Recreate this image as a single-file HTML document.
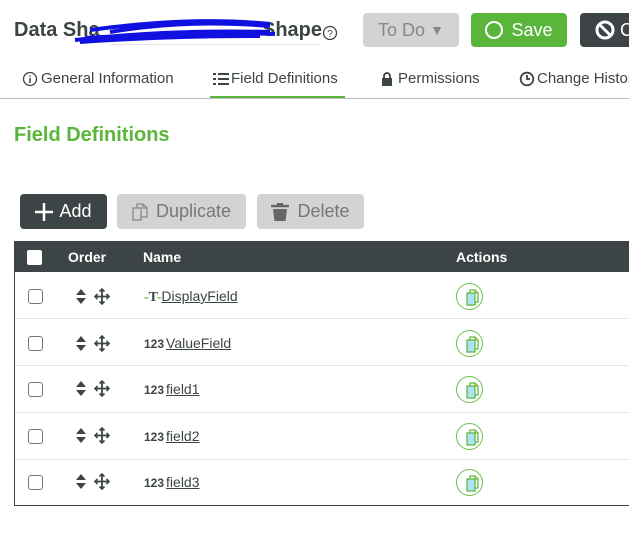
<!DOCTYPE html>
<html><head><style>
*{margin:0;padding:0;box-sizing:border-box}
body{width:629px;height:548px;overflow:hidden;background:#fff;font-family:"Liberation Sans",sans-serif;color:#3d4446;position:relative}
.a{position:absolute}
.btn{position:absolute;border-radius:4px;font-size:18px;display:flex;align-items:center;justify-content:center}
.tab{position:absolute;top:70px;font-size:15px;color:#3d4446;white-space:nowrap;display:flex;align-items:center}
.row{position:absolute;left:15px;width:620px;height:47px;border-bottom:1px solid #e5e5e5}
.cb{position:absolute;left:13px;width:15px;height:15px;border:1.5px solid #777;border-radius:3px;background:#fff}
.nm{position:absolute;left:129px;font-size:14px;white-space:nowrap}
.nm u{color:#3d4446}
.nm b{font-size:12px;margin-right:2px}
.ord{position:absolute;left:60px}
.act{position:absolute;left:441px;width:27px;height:27px;border:1px solid #6cc04a;border-radius:50%}
.act svg{position:absolute;left:6px;top:5px}
</style></head><body>
<div class="a" style="left:14px;top:19px;font-size:20px;font-weight:bold">Data Sha</div>
<div class="a" style="left:262px;top:19px;font-size:20px;font-weight:bold">Shape</div>
<svg class="a" style="left:70px;top:12px" width="210" height="35"><path d="M20 18 C80 10 140 6 200 12 M5 28 C60 22 120 18 200 20 M10 30 C70 26 120 24 190 24 M40 20 C100 10 150 10 200 14 M15 26 C80 22 150 20 205 22" stroke="#1010e0" stroke-width="4" fill="none"/></svg>
<svg class="a" style="left:322px;top:25px" width="16" height="16"><circle cx="8" cy="8" r="6.5" stroke="#3d4446" stroke-width="1.3" fill="none"/><text x="8" y="12" font-size="10" text-anchor="middle" fill="#3d4446" font-family="Liberation Sans">?</text></svg>
<div class="a" style="left:110px;top:44px;width:210px;height:1px;background:#e5e5e5"></div>
<div class="btn" style="left:363px;top:13px;width:96px;height:34px;background:#d3d3d3;color:#888">To Do&nbsp;<span style="font-size:14px">▼</span></div>
<div class="btn" style="left:471px;top:13px;width:96px;height:34px;background:#5ab63b;color:#fff"><span style="width:18px;height:18px;border:2.5px solid #fff;border-radius:50%;margin-right:8px"></span>Save</div>
<div class="btn" style="left:580px;top:13px;width:80px;height:34px;background:#3d4446;color:#fff;justify-content:flex-start;padding-left:15px"><svg width="20" height="20"><circle cx="10" cy="10" r="8" stroke="#fff" stroke-width="3" fill="none"/><path d="M5 5L15 15" stroke="#fff" stroke-width="3"/></svg>&nbsp;C</div>
<div class="tab" style="left:22px"><svg width="16" height="16" style="margin-right:3px"><circle cx="8" cy="8" r="6.5" stroke="#3d4446" stroke-width="1.3" fill="none"/><path d="M8 7v5M8 4.5v1.2" stroke="#3d4446" stroke-width="1.5"/></svg>General Information</div>
<div class="tab" style="left:213px"><svg width="16" height="14" style="margin-right:2px"><path d="M0 2h3M5 2h11M0 7h3M5 7h11M0 12h3M5 12h11" stroke="#3d4446" stroke-width="2"/></svg>Field Definitions</div>
<div class="a" style="left:210px;top:96px;width:135px;height:3px;background:#5ab63b"></div>
<div class="tab" style="left:381px"><svg width="12" height="14" style="margin-right:5px"><path d="M3 6V4a3 3 0 0 1 6 0v2" stroke="#3d4446" stroke-width="1.8" fill="none"/><rect x="1" y="6" width="10" height="8" fill="#3d4446"/></svg>Permissions</div>
<div class="tab" style="left:519px"><svg width="16" height="16" style="margin-right:2px"><circle cx="8" cy="8" r="6.3" stroke="#3d4446" stroke-width="1.8" fill="none"/><path d="M8 4v4h3" stroke="#3d4446" stroke-width="1.8" fill="none"/></svg>Change History</div>
<div class="a" style="left:0;top:98px;width:629px;height:1px;background:#bbb"></div>
<div class="a" style="left:14px;top:124px;font-size:20px;font-weight:bold;color:#5ab63b">Field Definitions</div>
<div class="btn" style="left:20px;top:194px;width:87px;height:35px;background:#3d4446;color:#fff"><svg width="18" height="18" style="margin-right:6px"><path d="M9 0v18M0 9h18" stroke="#fff" stroke-width="2.5"/></svg>Add</div>
<div class="btn" style="left:117px;top:194px;width:129px;height:35px;background:#d3d3d3;color:#777"><svg width="16" height="18" style="margin-right:8px"><path d="M1 5h8v12H1zM5 5V1h6l4 4v9H9M11 1v4h4" stroke="#888" stroke-width="1.3" fill="none"/></svg>Duplicate</div>
<div class="btn" style="left:257px;top:194px;width:107px;height:35px;background:#d3d3d3;color:#777"><svg width="18" height="18" style="margin-right:8px"><path d="M0 3h18" stroke="#666" stroke-width="2.5"/><path d="M6 1h6" stroke="#666" stroke-width="2"/><path d="M2 6h14l-1.5 12h-11z" fill="#666"/></svg>Delete</div>
<div class="a" style="left:14px;top:241px;width:620px;height:265px;border:1px solid #3d4446;border-right:none"></div>
<div class="a" style="left:14px;top:241px;width:620px;height:31px;background:#3d4446;color:#fff;font-size:14px;font-weight:bold">
<div class="a" style="left:13px;top:9px;width:15px;height:15px;background:#fff;border-radius:2px"></div>
<div class="a" style="left:54px;top:8px">Order</div><div class="a" style="left:129px;top:8px">Name</div><div class="a" style="left:442px;top:8px">Actions</div></div>
<svg width="0" height="0" style="position:absolute"><defs>
<g id="o"><path d="M1 7L6 1L11 7zM1 10L6 16L11 10z" fill="#3d4446"/><path d="M27 1v15M20 8.5h14" stroke="#3d4446" stroke-width="1.8"/><path d="M24.5 3.5L27 1L29.5 3.5M24.5 13.5L27 16L29.5 13.5M22.5 6L20 8.5L22.5 11M31.5 6L34 8.5L31.5 11" stroke="#3d4446" stroke-width="1.6" fill="none"/></g>
<g id="c"><path d="M4 4h8v12H4z" fill="#aee3f5" stroke="#5ab63b" stroke-width="1.2"/><path d="M7 4V1h5l3 3v9h-3" fill="none" stroke="#5ab63b" stroke-width="1.2"/><path d="M12 1v3h3" fill="#f5c04a" stroke="#5ab63b" stroke-width="1"/></g>
</defs></svg>
<div class="row" style="top:272px"><div class="cb" style="top:17px"></div><svg class="ord" style="top:16px" width="36" height="17"><use href="#o"/></svg><div class="nm" style="top:16px"><span style="font-family:'Liberation Serif';font-weight:bold"><span style="color:#5ab63b">-</span>T<span style="color:#5ab63b">-</span></span><u>DisplayField</u></div><div class="act" style="top:11px"><svg width="18" height="18"><use href="#c"/></svg></div></div>
<div class="row" style="top:319px"><div class="cb" style="top:17px"></div><svg class="ord" style="top:16px" width="36" height="17"><use href="#o"/></svg><div class="nm" style="top:16px"><b>123</b><u>ValueField</u></div><div class="act" style="top:11px"><svg width="18" height="18"><use href="#c"/></svg></div></div>
<div class="row" style="top:366px"><div class="cb" style="top:16px"></div><svg class="ord" style="top:14px" width="36" height="17"><use href="#o"/></svg><div class="nm" style="top:15px"><b>123</b><u>field1</u></div><div class="act" style="top:10px"><svg width="18" height="18"><use href="#c"/></svg></div></div>
<div class="row" style="top:413px"><div class="cb" style="top:16px"></div><svg class="ord" style="top:14px" width="36" height="17"><use href="#o"/></svg><div class="nm" style="top:15px"><b>123</b><u>field2</u></div><div class="act" style="top:10px"><svg width="18" height="18"><use href="#c"/></svg></div></div>
<div class="row" style="top:459px;border-bottom:none"><div class="cb" style="top:16px"></div><svg class="ord" style="top:14px" width="36" height="17"><use href="#o"/></svg><div class="nm" style="top:15px"><b>123</b><u>field3</u></div><div class="act" style="top:10px"><svg width="18" height="18"><use href="#c"/></svg></div></div>
</body></html>
